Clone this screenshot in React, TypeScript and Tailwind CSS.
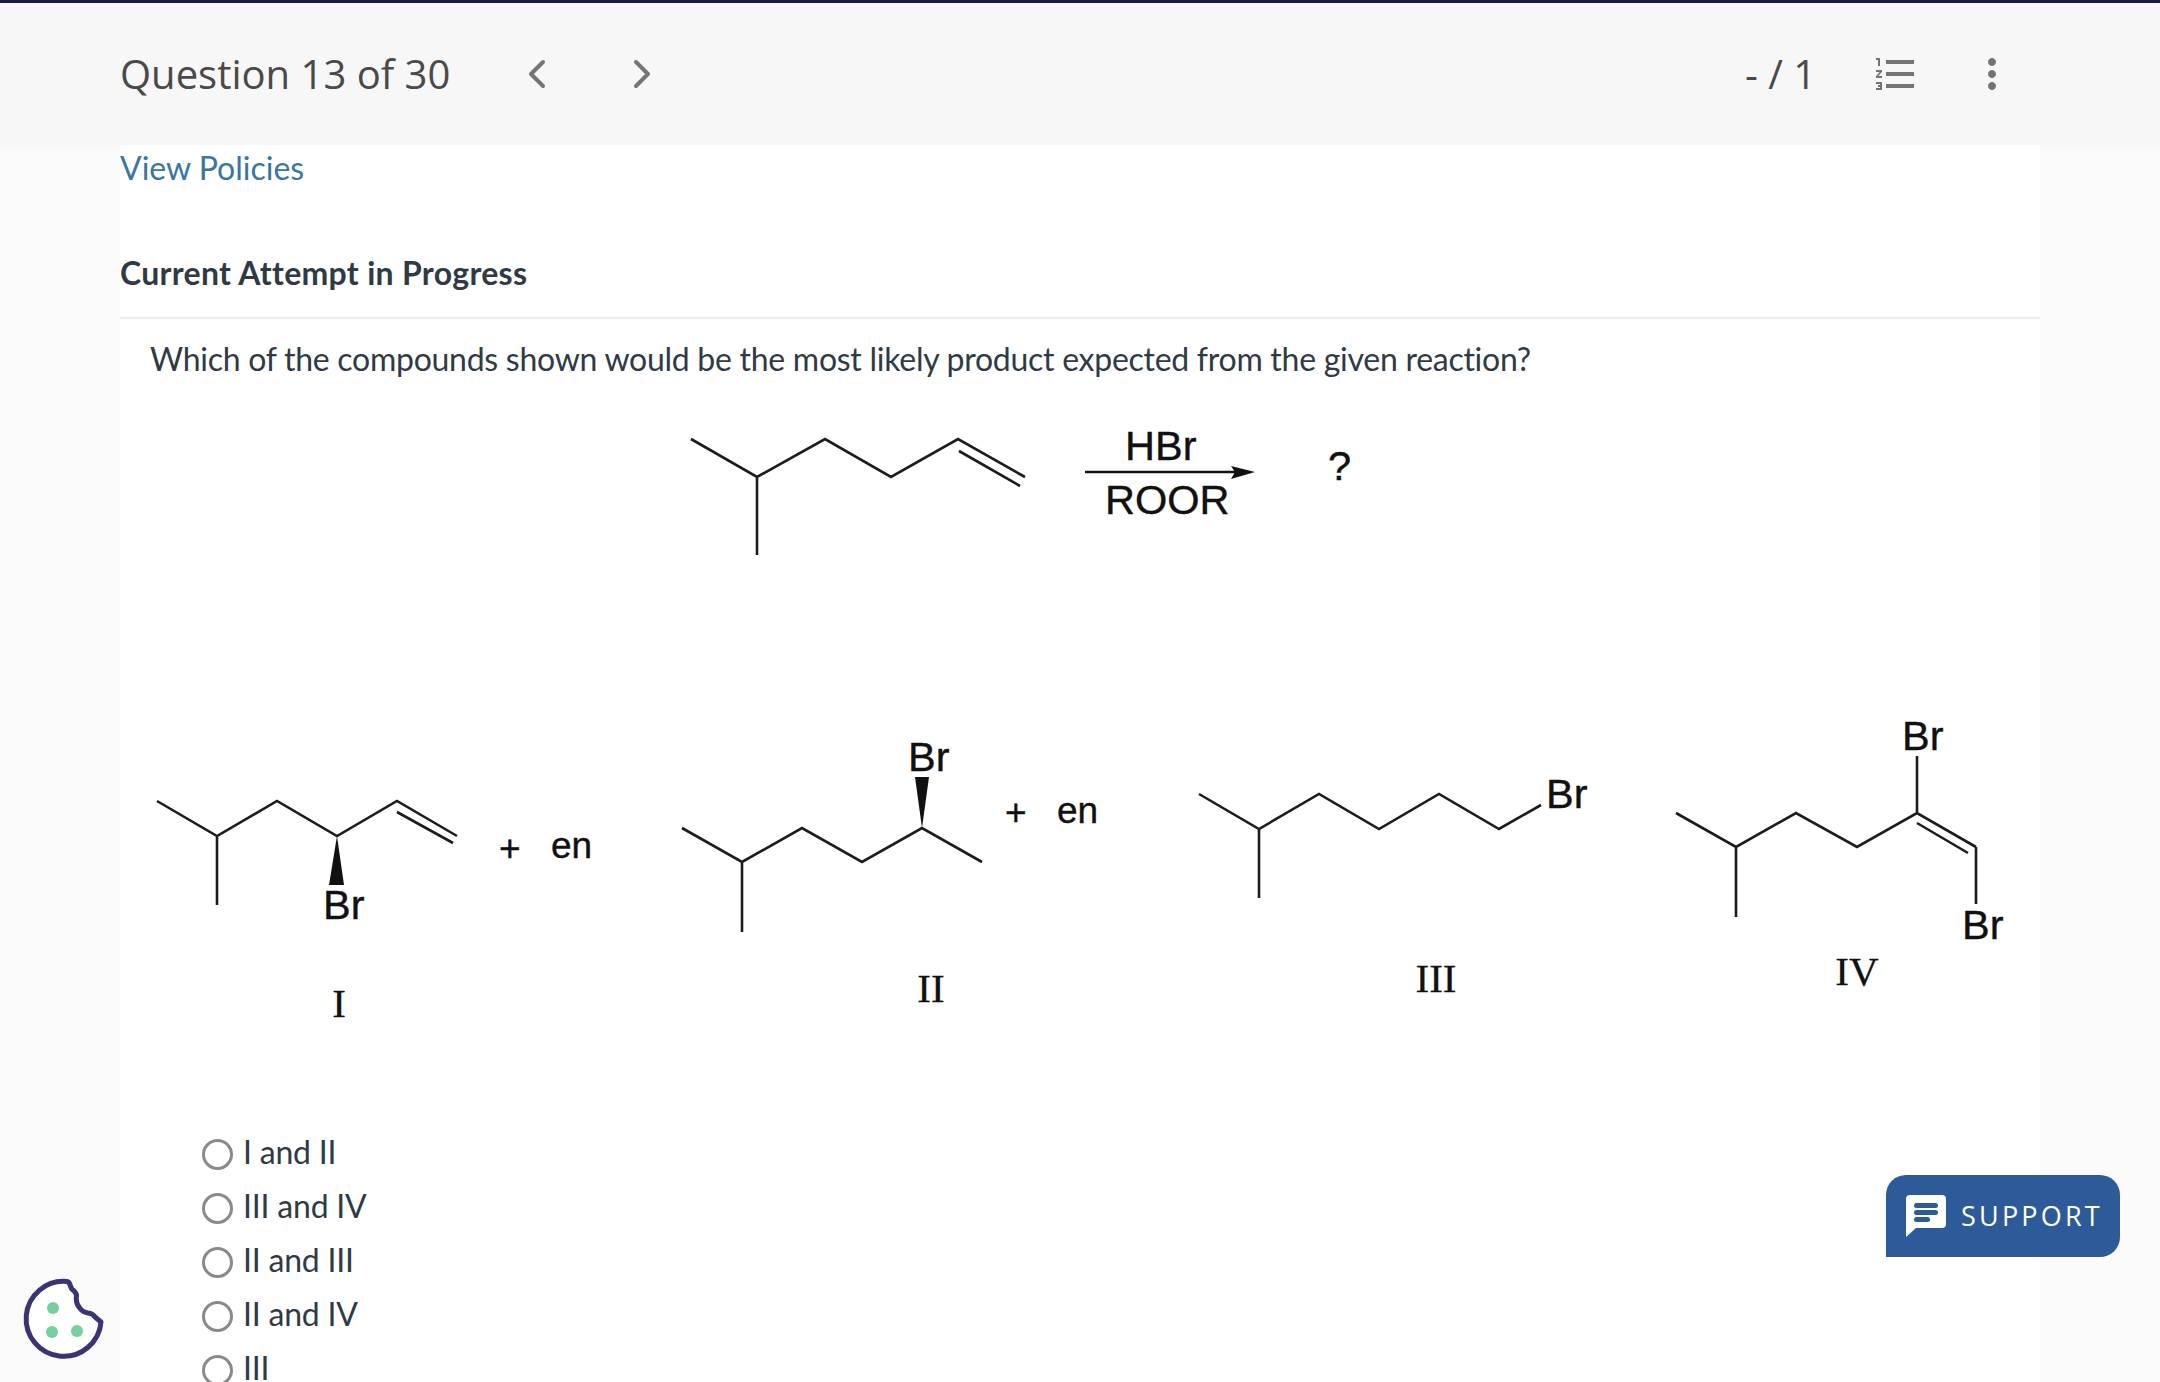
import React from 'react';
import { ChevronLeft, ChevronRight } from 'lucide-react';
import { MdFormatListNumbered, MdMoreVert } from 'react-icons/md';

const options = ['I and II', 'III and IV', 'II and III', 'II and IV', 'III'];

function Bonds({ d }: { d: string }) {
  return <path d={d} fill="none" stroke="#1c1c1c" strokeWidth="2.6" strokeLinejoin="miter" />;
}

function Label({ x, y, children }: { x: number; y: number; children: React.ReactNode }) {
  return (
    <text x={x} y={y} fontSize="41.5" fill="#111" stroke="#111" strokeWidth="0.4" className="font-['Liberation_Sans']">
      {children}
    </text>
  );
}

function Numeral({ x, y, children }: { x: number; y: number; children: React.ReactNode }) {
  return (
    <text x={x} y={y} fontSize="41" fill="#111" stroke="#111" strokeWidth="0.3" textAnchor="middle" className="font-['Liberation_Serif']">
      {children}
    </text>
  );
}

function Plus({ x, y }: { x: number; y: number }) {
  return (
    <text x={x} y={y} fontSize="37" fill="#111" stroke="#111" strokeWidth="0.4" className="font-['Liberation_Sans']">
      +
    </text>
  );
}

function En({ x, y }: { x: number; y: number }) {
  return (
    <text x={x} y={y} fontSize="37" fill="#111" stroke="#111" strokeWidth="0.4" className="font-['Liberation_Sans']">
      en
    </text>
  );
}

// viewBox values follow page pixels so the molecule points stay readable
function Reaction() {
  return (
    <svg viewBox="680 415 680 150" className="ml-[560px] mt-[33px] block h-[150px] w-[680px]">
      <Bonds d="M691 439 L757 477 L825 439 L891 477 L958 439 L1025 477 M959 451 L1020 486 M757 477 V555" />
      <path d="M1085 472 H1240" stroke="#111" strokeWidth="2.6" />
      <path d="M1231 466 L1255 472 L1231 479 L1235 472 Z" fill="#111" />
      <Label x={1125} y={460}>HBr</Label>
      <Label x={1105} y={514}>ROOR</Label>
      <Label x={1328} y={480}>?</Label>
    </svg>
  );
}

function Products() {
  return (
    <svg viewBox="140 710 1880 330" className="ml-[20px] mt-[145px] block h-[330px] w-[1880px]">
      {/* I */}
      <Bonds d="M157 801 L217 836 L277 801 L337 836 L397 801 L457 836 M397 812 L453 843 M217 836 V905" />
      <path d="M337 836 L329 885 H344 Z" fill="#111" />
      <Label x={323} y={919}>Br</Label>
      <Plus x={499} y={861} />
      <En x={551} y={858} />
      <Numeral x={339} y={1017}>I</Numeral>

      {/* II */}
      <Bonds d="M682 828 L742 862 L802 828 L862 862 L922 828 L982 862 M742 862 V932" />
      <path d="M922 828 L915 777 H929 Z" fill="#111" />
      <Label x={908} y={771}>Br</Label>
      <Plus x={1005} y={825} />
      <En x={1057} y={823} />
      <Numeral x={931} y={1002}>II</Numeral>

      {/* III */}
      <Bonds d="M1199 794 L1259 829 L1319 794 L1379 829 L1439 794 L1499 829 L1541 805 M1259 829 V898" />
      <Label x={1546} y={808}>Br</Label>
      <Numeral x={1436} y={992}>III</Numeral>

      {/* IV */}
      <Bonds d="M1676 813 L1736 847 L1796 813 L1857 847 L1917 813 L1976 847 M1917 823 L1968 853 M1736 847 V917 M1917 813 V756 M1976 847 V904" />
      <Label x={1902} y={750}>Br</Label>
      <Label x={1962} y={939}>Br</Label>
      <Numeral x={1857} y={985}>IV</Numeral>
    </svg>
  );
}

function CookieIcon() {
  return (
    <svg viewBox="0 0 90 90" className="absolute left-[20px] top-[1275px] h-[90px] w-[90px]">
      <path
        d="M47 6.5 Q49.5 7 50 10 L51.7 14 Q56 17 56.5 20 Q55.5 28 59 32 Q62 37 68 38 Q73 38.5 75 42 L81 47 A37.5 37.5 0 1 1 47 6.5 Z"
        fill="#fff"
        stroke="#3a3375"
        strokeWidth="5"
        strokeLinejoin="round"
      />
      <circle cx="33" cy="33" r="6" fill="#76cf9f" />
      <circle cx="32" cy="57" r="6" fill="#76cf9f" />
      <circle cx="57" cy="56" r="6" fill="#76cf9f" />
    </svg>
  );
}

function SupportButton() {
  return (
    <button className="absolute left-[1886px] top-[1175px] flex h-[82px] w-[234px] items-center gap-[15px] rounded-[20px] rounded-bl-none bg-[#2d5b9a] pl-[20px] font-['Open_Sans'] text-[27px] font-medium tracking-[3.2px] text-white">
      <svg viewBox="0 0 40 42" className="h-[42px] w-[40px] shrink-0">
        <path d="M4 0 H36 A4 4 0 0 1 40 4 V29 A4 4 0 0 1 36 33 H10 L0 42 V4 A4 4 0 0 1 4 0 Z" fill="#fff" />
        <rect x="8" y="8" width="24" height="5" rx="2.5" fill="#2d5b9a" />
        <rect x="8" y="15" width="24" height="5" rx="2.5" fill="#2d5b9a" />
        <rect x="8" y="22" width="16" height="5" rx="2.5" fill="#2d5b9a" />
      </svg>
      SUPPORT
    </button>
  );
}

export default function App() {
  return (
    <div className="relative h-[1382px] overflow-hidden bg-[#fafafa] font-['Lato'] text-[#2f3a45]">
      <header className="relative flex h-[145px] items-center border-t-[3px] border-[#161f45] bg-[#f7f7f8] pl-[120px] font-['Open_Sans'] text-[40px] font-normal text-[#4a4a4a]">
        <span className="w-[393px]">Question 13 of 30</span>
        <ChevronLeft size={48} strokeWidth={2} className="text-[#757575]" />
        <ChevronRight size={48} strokeWidth={2} className="ml-[57px] text-[#757575]" />
        <span className="ml-[1079px] w-[127px]">- / 1</span>
        <MdFormatListNumbered size={48} className="text-[#757575]" />
        <MdMoreVert size={48} className="ml-[48px] text-[#757575]" />
      </header>

      <main className="mx-[120px] h-[1237px] bg-white">
        <a className="block text-[32px] leading-[45px] text-[#3a76a0]">View Policies</a>
        <h2 className="mt-[60px] border-b-2 border-[#eeeeee] pb-[21px] text-[32px] font-bold leading-[46px] tracking-[0.3px] text-[#2f3a45]">
          Current Attempt in Progress
        </h2>
        <p className="ml-[30px] mt-[17px] text-[32px] leading-[46px] tracking-[-0.27px]">
          Which of the compounds shown would be the most likely product expected from the given reaction?
        </p>

        <Reaction />
        <Products />

        <ul className="ml-[82px] mt-[87px]">
          {options.map((option) => (
            <li key={option} className="flex h-[54px] items-center gap-[10px] text-[32px] tracking-[-0.2px]">
              <span className="h-[31px] w-[31px] rounded-full border-[3px] border-[#8a8a8a] bg-white" />
              <span className="pb-[4px]">{option}</span>
            </li>
          ))}
        </ul>
      </main>

      <CookieIcon />
      <SupportButton />
    </div>
  );
}
